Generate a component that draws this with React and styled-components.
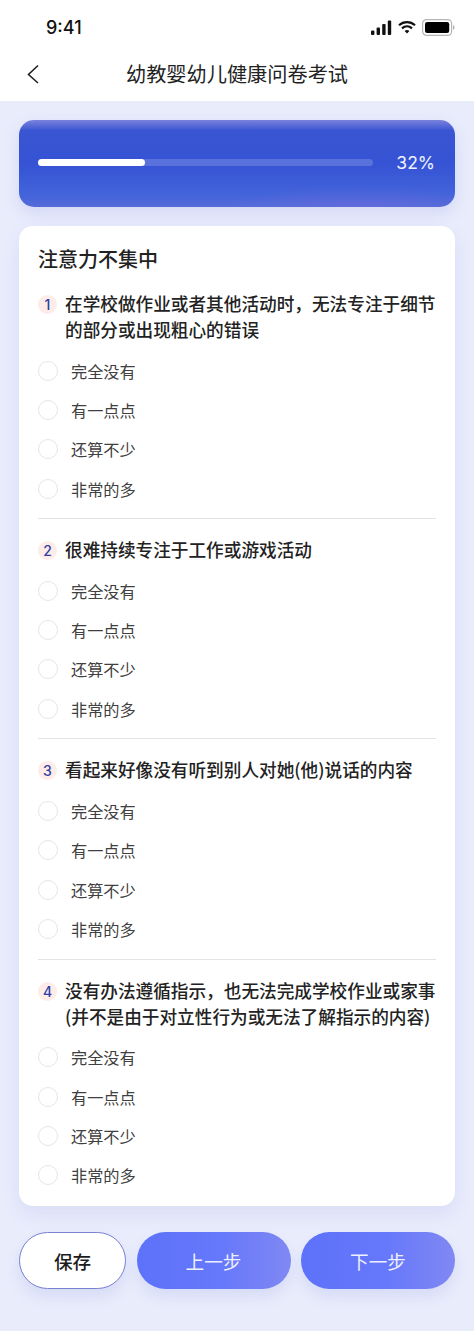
import React from "react";
import styled, { createGlobalStyle } from "styled-components";

const GlobalStyle = createGlobalStyle`
  html, body {
    margin: 0;
    padding: 0;
    background: #e9ecfb;
  }
  * {
    box-sizing: border-box;
  }
`;

const Page = styled.div`
  width: 474px;
  height: 1331px;
  overflow: hidden;
  display: flex;
  flex-direction: column;
  background: #e9ecfb;
  font-family: "Noto Sans CJK SC", "Liberation Sans", sans-serif;
  color: #222;
`;

const Top = styled.header`
  height: 101px;
  background: #fff;
  display: flex;
  flex-direction: column;
`;

const StatusBar = styled.div`
  height: 52px;
  padding: 2px 19px 0 46px;
  display: flex;
  align-items: center;
  justify-content: space-between;
`;

const Time = styled.span`
  font-family: "Inter", "Liberation Sans", sans-serif;
  font-size: 18px;
  font-weight: 500;
  color: #111;
`;

const StatusIcons = styled.div`
  display: flex;
  align-items: center;
  gap: 6px;
`;

const NavBar = styled.div`
  height: 44px;
  padding: 0 26px;
  display: flex;
  align-items: center;
  position: relative;
  justify-content: center;
`;

const BackIcon = styled.svg`
  position: absolute;
  left: 26px;
  top: 12px;
`;

const NavTitle = styled.h1`
  margin: 0;
  font-size: 20.2px;
  line-height: 28px;
  font-weight: 400;
  color: #222;
`;

const Content = styled.main`
  padding: 19px 19px 0;
  display: flex;
  flex-direction: column;
  gap: 19px;
`;

const ProgressCard = styled.section`
  height: 87px;
  border-radius: 15px;
  padding: 0 20px 2px 19px;
  display: flex;
  align-items: center;
  gap: 23px;
  background:
    radial-gradient(ellipse 130px 22px at 78% 100%, rgba(120, 105, 220, 0.4), transparent),
    linear-gradient(180deg, #7b84dc 0, #3a55d2 12%, #3553d4 50%, #4263da 85%, #556cd9 100%);
  box-shadow: 0 6px 16px rgba(120, 135, 225, 0.2);
`;

const Track = styled.div`
  flex: 1;
  height: 7px;
  border-radius: 4px;
  background: rgba(255, 255, 255, 0.18);
`;

const TrackFill = styled.div`
  height: 100%;
  border-radius: 4px;
  background: #fff;
`;

const Percent = styled.span`
  font-family: "Inter", "Liberation Sans", sans-serif;
  font-size: 17.5px;
  color: #eef1ff;
`;

const Card = styled.section`
  height: 980px;
  border-radius: 14px;
  background: #fff;
  padding: 18px 19px 0;
  box-shadow: 0 8px 18px rgba(120, 135, 225, 0.14);
`;

const CardTitle = styled.h2`
  margin: 0 0 17px;
  font-size: 20px;
  line-height: 30px;
  font-weight: 500;
  color: #222;
`;

const Question = styled.div`
  padding-bottom: 10px;
  margin-bottom: 18px;
  border-bottom: ${(p) => (p.$last ? "none" : "1px solid #e3e3e6")};
`;

const QuestionHead = styled.div`
  display: flex;
  align-items: flex-start;
  gap: 8px;
  margin-bottom: 8px;
`;

const Badge = styled.span`
  flex: none;
  width: 19px;
  height: 19px;
  margin-top: 4px;
  border-radius: 50%;
  background: #fdece7;
  color: #2f3fa8;
  font-family: "Inter", "Liberation Sans", sans-serif;
  font-size: 14px;
  font-weight: 500;
  display: flex;
  align-items: center;
  justify-content: center;
`;

const QuestionText = styled.p`
  margin: 0;
  font-size: 17.65px;
  line-height: 26px;
  font-weight: 500;
  color: #222;
  white-space: nowrap;
`;

const Option = styled.label`
  height: 39.3px;
  display: flex;
  align-items: center;
  gap: 13px;
`;

const Radio = styled.span`
  width: 20px;
  height: 20px;
  border-radius: 50%;
  border: 1.5px solid #e6e6e8;
  background: #fff;
`;

const OptionText = styled.span`
  font-size: 16.2px;
  color: #404040;
`;

const Actions = styled.footer`
  display: flex;
  gap: 10.5px;
  margin-top: 7px;
`;

const Button = styled.button`
  flex: ${(p) => (p.$outline ? "0 0 107px" : "1")};
  height: 57px;
  border-radius: 29px;
  font-family: inherit;
  font-size: 18.6px;
  color: ${(p) => (p.$outline ? "#1c1c1c" : "#eef0ff")};
  font-weight: ${(p) => (p.$outline ? 500 : 400)};
  border: ${(p) => (p.$outline ? "1.5px solid #7a80d2" : "none")};
  background: ${(p) =>
    p.$outline ? "#fff" : "linear-gradient(90deg, #5d72fa 0%, #6678fb 55%, #8088f2 100%)"};
  box-shadow: 0 8px 14px rgba(120, 135, 225, 0.16);
`;

const options = ["完全没有", "有一点点", "还算不少", "非常的多"];

const questions = [
  ["在学校做作业或者其他活动时\uFF0C无法专注于细节", "的部分或出现粗心的错误"],
  ["很难持续专注于工作或游戏活动"],
  ["看起来好像没有听到别人对她(他)说话的内容"],
  ["没有办法遵循指示\uFF0C也无法完成学校作业或家事", "(并不是由于对立性行为或无法了解指示的内容)"],
];

const App = () => {
  return (
    <Page>
      <GlobalStyle />
      <Top>
        <StatusBar>
          <Time>9:41</Time>
          <StatusIcons>
            <svg width="21" height="15" viewBox="0 0 21 15">
              <rect x="0" y="10.5" width="3.4" height="4.5" rx="1" fill="#111" />
              <rect x="5.6" y="7.5" width="3.4" height="7.5" rx="1" fill="#111" />
              <rect x="11.2" y="4" width="3.4" height="11" rx="1" fill="#111" />
              <rect x="16.8" y="0.5" width="3.4" height="14.5" rx="1" fill="#111" />
            </svg>
            <svg width="18" height="14" viewBox="0 0 18 14" fill="none">
              <path d="M1 5.2C5.6 1 12.4 1 17 5.2" stroke="#111" strokeWidth="2.2" />
              <path d="M4 8.4C6.9 5.8 11.1 5.8 14 8.4" stroke="#111" strokeWidth="2.2" />
              <path d="M6.6 11 9 13.5 11.4 11C10 9.8 8 9.8 6.6 11Z" fill="#111" />
            </svg>
            <svg width="33" height="17" viewBox="0 0 33 17">
              <rect x="0.6" y="0.6" width="29" height="15.8" rx="4" fill="none" stroke="#b5b5b5" strokeWidth="1.2" />
              <rect x="3" y="3" width="24.2" height="11" rx="2.2" fill="#000" />
              <path d="M31 6v5c1-.4 1.6-1.4 1.6-2.5S32 6.4 31 6Z" fill="#b5b5b5" />
            </svg>
          </StatusIcons>
        </StatusBar>
        <NavBar>
          <BackIcon width="14" height="20" viewBox="0 0 14 20" fill="none">
            <path d="M12 1.5 2.5 10.5 12 19" stroke="#222" strokeWidth="1.6" />
          </BackIcon>
          <NavTitle>幼教婴幼儿健康问卷考试</NavTitle>
        </NavBar>
      </Top>
      <Content>
        <ProgressCard>
          <Track>
            <TrackFill style={{ width: "32%" }} />
          </Track>
          <Percent>32%</Percent>
        </ProgressCard>
        <Card>
          <CardTitle>注意力不集中</CardTitle>
          {questions.map((lines, i) => (
            <Question key={i} $last={i === questions.length - 1}>
              <QuestionHead>
                <Badge>{i + 1}</Badge>
                <QuestionText>
                  {lines.map((line) => (
                    <React.Fragment key={line}>
                      {line}
                      <br />
                    </React.Fragment>
                  ))}
                </QuestionText>
              </QuestionHead>
              {options.map((o) => (
                <Option key={o}>
                  <Radio />
                  <OptionText>{o}</OptionText>
                </Option>
              ))}
            </Question>
          ))}
        </Card>
        <Actions>
          <Button $outline>保存</Button>
          <Button>上一步</Button>
          <Button>下一步</Button>
        </Actions>
      </Content>
    </Page>
  );
};

export default App;
